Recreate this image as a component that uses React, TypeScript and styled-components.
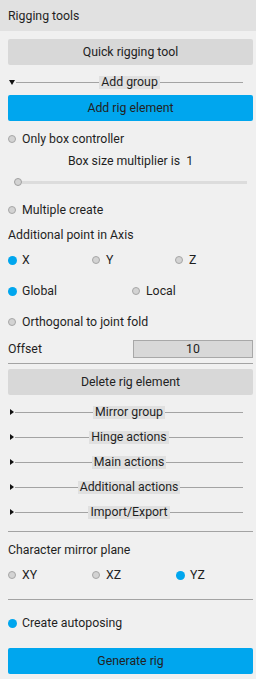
import React, { useState } from "react"
import styled, { createGlobalStyle } from "styled-components"

const GlobalStyle = createGlobalStyle`
  body {
    margin: 0;
    background: #f0f0f0;
    font-family: Roboto, "Liberation Sans", sans-serif;
    font-size: 12.3px;
    color: #1f1f1f;
  }
`

const Panel = styled.div`
  width: 256px;
  height: 679px;
  background: #f0f0f0;
  display: flex;
  flex-direction: column;
  overflow: hidden;
`

const Header = styled.div`
  height: 31px;
  background: #e1e1e1;
  display: flex;
  align-items: center;
  padding-left: 8px;
  flex-shrink: 0;
`

const Body = styled.div`
  display: flex;
  flex-direction: column;
  padding: 0 3px 0 8px;
`

const Button = styled.button<{ $primary?: boolean; $mt: number }>`
  height: 26px;
  margin-top: ${(p) => p.$mt}px;
  border: none;
  border-radius: 2px;
  background: ${(p) => (p.$primary ? "#00a6ee" : "#d8d8d8")};
  color: #222;
  font-family: inherit;
  font-size: inherit;
  padding: 0;
  cursor: pointer;
`

const GroupRow = styled.div<{ $mt: number }>`
  height: 14px;
  margin-top: ${(p) => p.$mt}px;
  display: flex;
  align-items: center;
  padding-right: 10px;
`

const Arrow = styled.span<{ $open?: boolean }>`
  width: 0;
  height: 0;
  margin-left: 1px;
  margin-right: 1px;
  ${(p) =>
    p.$open
      ? `border-left: 3px solid transparent;
         border-right: 3px solid transparent;
         border-top: 5px solid #111;`
      : `border-top: 3px solid transparent;
         border-bottom: 3px solid transparent;
         border-left: 4px solid #111;
         margin-left: 2px;`}
`

const Rule = styled.span`
  flex: 1;
  height: 1px;
  background: #a3a3a3;
`

const GroupLabel = styled.span`
  background: #e0e0e0;
  padding: 0 2px;
  line-height: 13px;
`

const Row = styled.div<{ $mt: number; $h?: number }>`
  height: ${(p) => p.$h ?? 20}px;
  margin-top: ${(p) => p.$mt}px;
  display: flex;
  align-items: center;
`

const Centered = styled(Row)`
  justify-content: center;
`

const Grid = styled.div<{ $mt: number; $cols: string }>`
  height: 20px;
  margin-top: ${(p) => p.$mt}px;
  display: grid;
  grid-template-columns: ${(p) => p.$cols};
  align-items: center;
`

const Option = styled.label`
  display: flex;
  align-items: center;
  cursor: pointer;
`

const Dot = styled.span<{ $on: boolean }>`
  box-sizing: border-box;
  width: ${(p) => (p.$on ? 9 : 8)}px;
  height: ${(p) => (p.$on ? 9 : 8)}px;
  margin-right: ${(p) => (p.$on ? 5 : 6)}px;
  border-radius: 50%;
  background: ${(p) => (p.$on ? "#00a6ee" : "#d3d3d3")};
  border: ${(p) => (p.$on ? "none" : "1px solid #a6a6a6")};
`

const SliderTrack = styled.div`
  height: 12px;
  margin-top: 5px;
  margin-left: 6px;
  margin-right: 6px;
  display: flex;
  align-items: center;
`

const Thumb = styled.span`
  box-sizing: border-box;
  width: 8px;
  height: 8px;
  border-radius: 50%;
  background: #d3d3d3;
  border: 1px solid #a0a0a0;
`

const Track = styled.span`
  flex: 1;
  height: 3px;
  background: #dcdcdc;
`

const OffsetBox = styled.div`
  box-sizing: border-box;
  width: 120px;
  height: 18px;
  margin-left: auto;
  background: #d8d8d8;
  border: 1px solid #a8a8a8;
  display: flex;
  align-items: center;
  justify-content: center;
`

const Line = styled.div<{ $mt: number }>`
  height: 1px;
  margin-top: ${(p) => p.$mt}px;
  background: #a3a3a3;
`

const Radio = ({
  on,
  label,
  onClick,
}: {
  on: boolean
  label: string
  onClick?: () => void
}) => (
  <Option onClick={onClick}>
    <Dot $on={on} />
    {label}
  </Option>
)

const Group = ({ label, mt, open }: { label: string; mt: number; open?: boolean }) => (
  <GroupRow $mt={mt}>
    <Arrow $open={open} />
    <Rule />
    <GroupLabel>{label}</GroupLabel>
    <Rule />
  </GroupRow>
)

const App: React.FC = () => {
  const [axis, setAxis] = useState("X")
  const [space, setSpace] = useState("Global")
  const [plane, setPlane] = useState("YZ")

  return (
    <Panel>
      <GlobalStyle />
      <Header>Rigging tools</Header>
      <Body>
        <Button $mt={8}>Quick rigging tool</Button>
        <Group label="Add group" mt={10} open />
        <Button $mt={6} $primary>
          Add rig element
        </Button>
        <Row $mt={8}>
          <Radio on={false} label="Only box controller" />
        </Row>
        <Centered $mt={2}>Box size multiplier is&nbsp;&nbsp;1</Centered>
        <SliderTrack>
          <Thumb />
          <Track />
        </SliderTrack>
        <Row $mt={12}>
          <Radio on={false} label="Multiple create" />
        </Row>
        <Row $mt={5}>Additional point in Axis</Row>
        <Grid $mt={5} $cols="84px 83px 1fr">
          {["X", "Y", "Z"].map((a) => (
            <Radio key={a} on={axis === a} label={a} onClick={() => setAxis(a)} />
          ))}
        </Grid>
        <Grid $mt={11} $cols="124px 1fr">
          {["Global", "Local"].map((s) => (
            <Radio key={s} on={space === s} label={s} onClick={() => setSpace(s)} />
          ))}
        </Grid>
        <Row $mt={11}>
          <Radio on={false} label="Orthogonal to joint fold" />
        </Row>
        <Row $mt={8} $h={18}>
          Offset
          <OffsetBox>10</OffsetBox>
        </Row>
        <Line $mt={5} />
        <Button $mt={5}>Delete rig element</Button>
        <Group label="Mirror group" mt={10} />
        <Group label="Hinge actions" mt={11} />
        <Group label="Main actions" mt={11} />
        <Group label="Additional actions" mt={11} />
        <Group label="Import/Export" mt={11} />
        <Line $mt={12} />
        <Row $mt={8}>Character mirror plane</Row>
        <Grid $mt={5} $cols="84px 84px 1fr">
          {["XY", "XZ", "YZ"].map((a) => (
            <Radio key={a} on={plane === a} label={a} onClick={() => setPlane(a)} />
          ))}
        </Grid>
        <Line $mt={14} />
        <Row $mt={13}>
          <Radio on label="Create autoposing" />
        </Row>
        <Button $mt={15} $primary>
          Generate rig
        </Button>
      </Body>
    </Panel>
  )
}

export default App
